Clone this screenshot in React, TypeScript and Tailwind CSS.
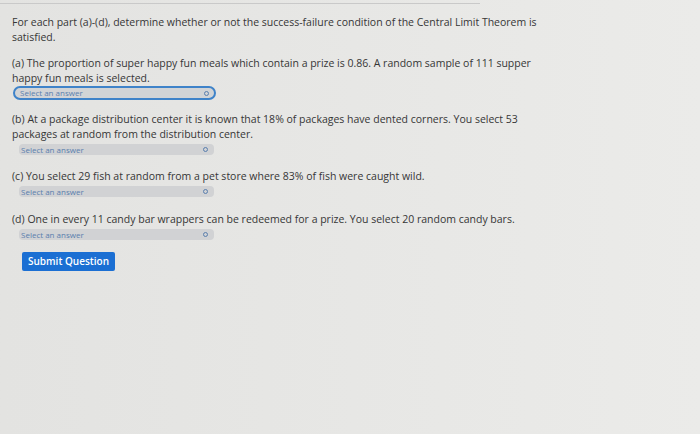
import { Fragment } from 'react';

const parts = [
  {
    id: 'a',
    lines: [
      'The proportion of super happy fun meals which contain a prize is 0.86. A random sample of 111 supper',
      'happy fun meals is selected.',
    ],
    gap: 'mt-[11px]',
    focused: true,
  },
  {
    id: 'b',
    lines: [
      'At a package distribution center it is known that 18% of packages have dented corners. You select 53',
      'packages at random from the distribution center.',
    ],
    gap: 'mt-[12px]',
  },
  {
    id: 'c',
    lines: ['You select 29 fish at random from a pet store where 83% of fish were caught wild.'],
    gap: 'mt-[14px]',
  },
  {
    id: 'd',
    lines: ['One in every 11 candy bar wrappers can be redeemed for a prize. You select 20 random candy bars.'],
    gap: 'mt-[15px]',
  },
];

function AnswerSelect({ focused }: { focused?: boolean }) {
  return (
    <div
      className={
        focused
          ? 'ml-[1px] mt-0 flex h-[14px] w-[203px] items-center justify-between rounded-full border-2 border-[#3f83c9] bg-[#d2d4d6] pl-[5px] pr-[5px]'
          : 'ml-[7px] mt-[2px] flex h-[11px] w-[195px] items-center justify-between rounded-[4px] bg-[#d1d2d4] pl-[2px] pr-[6px]'
      }
    >
      <span className="text-[8px] leading-none text-[#5a7fae]">Select an answer</span>
      <span className="h-[5px] w-[5px] rounded-full border border-[#5a7fae]" />
    </div>
  );
}

export default function App() {
  return (
    <div
      className="h-[434px] w-[700px] overflow-hidden bg-gradient-to-r from-[#e3e3e1] to-[#ebebe9] text-[#363636]"
      style={{ fontFamily: '"Open Sans", "Liberation Sans", sans-serif' }}
    >
      <div className="mt-[3px] h-px w-[480px] bg-[#c9c9c9]" />
      <div className="px-[12px] pt-[11px] text-[10.5px] leading-[15px]">
        <p>
          For each part (a)-(d), determine whether or not the success-failure condition of the Central Limit Theorem is
          <br />
          satisfied.
        </p>

        {parts.map((p) => (
          <div key={p.id} className={p.gap}>
            <p>
              ({p.id}){' '}
              {p.lines.map((l, j) => (
                <Fragment key={j}>
                  {j > 0 && <br />}
                  {l}
                </Fragment>
              ))}
            </p>
            <AnswerSelect focused={p.focused} />
          </div>
        ))}

        <button className="ml-[10px] mt-[12px] flex h-[19px] w-[93px] items-center justify-center rounded-[2px] bg-[#1b6fd3] text-[10px] font-semibold text-white">
          Submit Question
        </button>
      </div>
    </div>
  );
}
